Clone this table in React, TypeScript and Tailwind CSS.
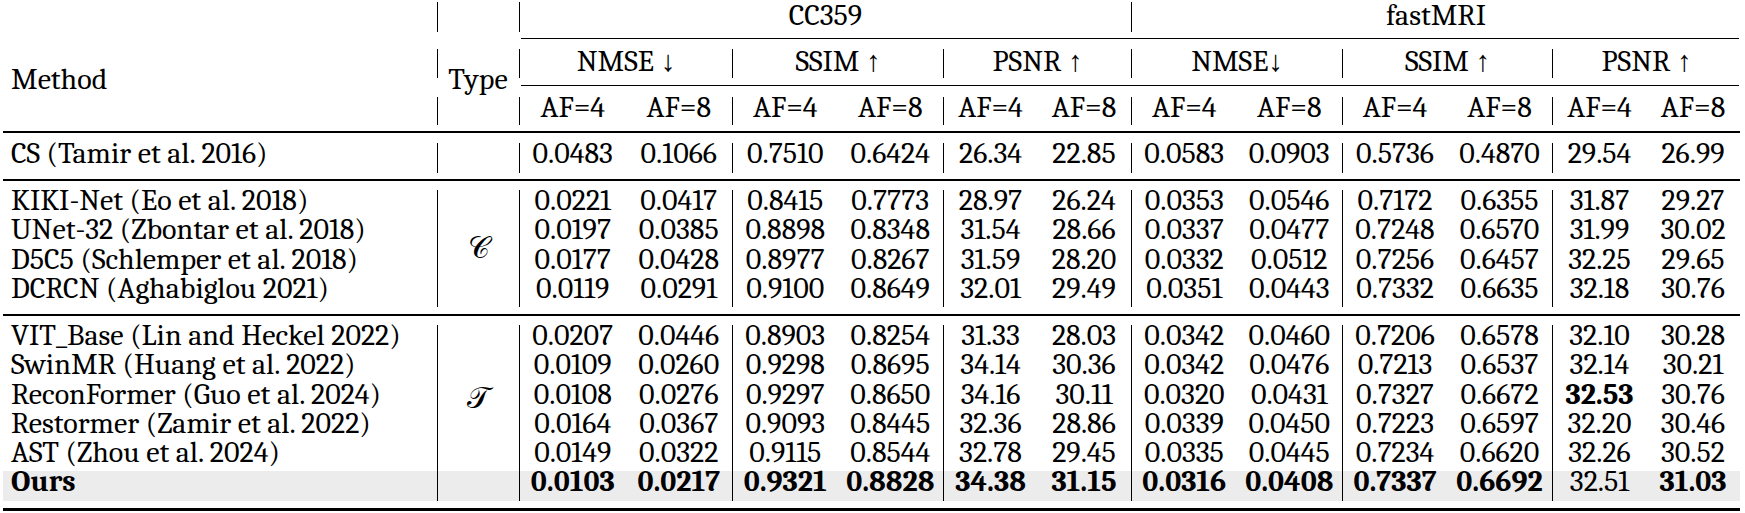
import type { ReactNode } from 'react';

const GRID =
  'grid grid-cols-[434px_82px_106.5px_106.5px_105.5px_105.5px_94px_94px_105.5px_105.5px_105px_105px_94px_94px]';

const METRICS = [
  { label: 'NMSE ', arrow: '↓', cls: 'col-start-3' },
  { label: 'SSIM ', arrow: '↑', cls: 'col-start-5' },
  { label: 'PSNR ', arrow: '↑', cls: 'col-start-7' },
  { label: 'NMSE', arrow: '↓', cls: 'col-start-9' },
  { label: 'SSIM ', arrow: '↑', cls: 'col-start-11' },
  { label: 'PSNR ', arrow: '↑', cls: 'col-start-13' },
];

const AF_COLS = [
  'col-start-3 border-l',
  'col-start-4',
  'col-start-5 border-l',
  'col-start-6',
  'col-start-7 border-l',
  'col-start-8',
  'col-start-9 border-l',
  'col-start-10',
  'col-start-11 border-l',
  'col-start-12',
  'col-start-13 border-l',
  'col-start-14',
];

type Row = { name: string; vals: string[]; bold?: boolean; shade?: boolean };

// a leading * marks a bold value
const baseline: Row = {
  name: 'CS (Tamir et al. 2016)',
  vals: ['0.0483', '0.1066', '0.7510', '0.6424', '26.34', '22.85', '0.0583', '0.0903', '0.5736', '0.4870', '29.54', '26.99'],
};

const cnnRows: Row[] = [
  {
    name: 'KIKI-Net (Eo et al. 2018)',
    vals: ['0.0221', '0.0417', '0.8415', '0.7773', '28.97', '26.24', '0.0353', '0.0546', '0.7172', '0.6355', '31.87', '29.27'],
  },
  {
    name: 'UNet-32 (Zbontar et al. 2018)',
    vals: ['0.0197', '0.0385', '0.8898', '0.8348', '31.54', '28.66', '0.0337', '0.0477', '0.7248', '0.6570', '31.99', '30.02'],
  },
  {
    name: 'D5C5 (Schlemper et al. 2018)',
    vals: ['0.0177', '0.0428', '0.8977', '0.8267', '31.59', '28.20', '0.0332', '0.0512', '0.7256', '0.6457', '32.25', '29.65'],
  },
  {
    name: 'DCRCN (Aghabiglou 2021)',
    vals: ['0.0119', '0.0291', '0.9100', '0.8649', '32.01', '29.49', '0.0351', '0.0443', '0.7332', '0.6635', '32.18', '30.76'],
  },
];

const transformerRows: Row[] = [
  {
    name: 'VIT_Base (Lin and Heckel 2022)',
    vals: ['0.0207', '0.0446', '0.8903', '0.8254', '31.33', '28.03', '0.0342', '0.0460', '0.7206', '0.6578', '32.10', '30.28'],
  },
  {
    name: 'SwinMR (Huang et al. 2022)',
    vals: ['0.0109', '0.0260', '0.9298', '0.8695', '34.14', '30.36', '0.0342', '0.0476', '0.7213', '0.6537', '32.14', '30.21'],
  },
  {
    name: 'ReconFormer (Guo et al. 2024)',
    vals: ['0.0108', '0.0276', '0.9297', '0.8650', '34.16', '30.11', '0.0320', '0.0431', '0.7327', '0.6672', '*32.53', '30.76'],
  },
  {
    name: 'Restormer (Zamir et al. 2022)',
    vals: ['0.0164', '0.0367', '0.9093', '0.8445', '32.36', '28.86', '0.0339', '0.0450', '0.7223', '0.6597', '32.20', '30.46'],
  },
  {
    name: 'AST (Zhou et al. 2024)',
    vals: ['0.0149', '0.0322', '0.9115', '0.8544', '32.78', '29.45', '0.0335', '0.0445', '0.7234', '0.6620', '32.26', '30.52'],
  },
];

const ours: Row = {
  name: 'Ours',
  bold: true,
  shade: true,
  vals: ['*0.0103', '*0.0217', '*0.9321', '*0.8828', '*34.38', '*31.15', '*0.0316', '*0.0408', '*0.7337', '*0.6692', '32.51', '*31.03'],
};

function Cells({ row, typeCell }: { row: Row; typeCell?: ReactNode }) {
  const bg = row.shade ? 'bg-[#ececec]' : '';
  return (
    <>
      <div className={`whitespace-nowrap pl-2 ${row.bold ? 'font-bold' : ''} ${bg}`}>{row.name}</div>
      {typeCell}
      {row.vals.map((v, i) => (
        <div
          key={i}
          className={`text-center ${i % 2 === 0 ? 'border-l border-black' : ''} ${v.startsWith('*') ? 'font-bold' : ''} ${bg}`}
        >
          {v.replace('*', '')}
        </div>
      ))}
    </>
  );
}

function Header() {
  return (
    <div className={`${GRID} grid-rows-[30px_17px_29px_19px_28px] pt-[2px]`}>
      <div className="col-start-1 row-span-5 row-start-1 pl-2 pt-[67px]">Method</div>
      <div className="col-start-2 row-start-1 border-l border-black" />
      <div className="col-start-2 row-start-3 border-l border-black" />
      <div className="col-start-2 row-start-5 border-l border-black" />
      <div className="col-start-2 row-span-5 row-start-1 pt-[67px] text-center">Type</div>

      <div className="col-span-6 col-start-3 row-start-1 border-l border-black pt-[3px] text-center">CC359</div>
      <div className="col-span-6 col-start-9 row-start-1 border-l border-black pt-[3px] text-center">fastMRI</div>

      <div className="col-span-12 col-start-3 row-start-2 pl-[2px] pr-px pt-[6px]">
        <div className="h-px bg-black" />
      </div>

      {METRICS.map((m, i) => (
        <div key={i} className={`${m.cls} col-span-2 row-start-3 whitespace-pre border-l border-black text-center`}>
          {m.label}
          <span className="font-sans text-[29px]">{m.arrow}</span>
        </div>
      ))}

      <div className="col-span-12 col-start-3 row-start-4 pl-[2px] pr-px pt-[7px]">
        <div className="h-px bg-black" />
      </div>

      {AF_COLS.map((c, i) => (
        <div key={i} className={`${c} row-start-5 border-black text-center`}>
          {i % 2 === 0 ? 'AF=4' : 'AF=8'}
        </div>
      ))}
    </div>
  );
}

export default function App() {
  return (
    <div className="h-[513px] w-[1745px] overflow-hidden bg-white pl-[3px] font-serif text-[30px] leading-[21px] text-black">
      <div className="w-[1737px]">
        <Header />
        <div className="mt-[6px] h-[2px] bg-black" />

        <div className={`${GRID} mt-[10px] auto-rows-[30px]`}>
          <Cells row={baseline} typeCell={<div className="border-l border-black" />} />
        </div>
        <div className="mt-[6px] h-[1.5px] bg-black" />

        <div className={`${GRID} mt-[9.5px] auto-rows-[29.25px]`}>
          {cnnRows.map((r, i) => (
            <Cells
              key={r.name}
              row={r}
              typeCell={
                i === 0 ? (
                  <div className="row-span-4 flex items-center justify-center border-l border-black text-[30px]">
                    𝒞
                  </div>
                ) : undefined
              }
            />
          ))}
        </div>
        <div className="mt-[7px] h-[1.5px] bg-black" />

        <div className={`${GRID} mt-[9.5px] auto-rows-[29.25px]`}>
          {transformerRows.map((r, i) => (
            <Cells
              key={r.name}
              row={r}
              typeCell={
                i === 0 ? (
                  <div className="row-span-5 flex items-center justify-center border-l border-black text-[30px]">
                    𝒯
                  </div>
                ) : undefined
              }
            />
          ))}
          <Cells row={ours} typeCell={<div className="border-l border-black bg-[#ececec]" />} />
        </div>
        <div className="mt-[7.5px] h-[3px] bg-black" />
      </div>
    </div>
  );
}
